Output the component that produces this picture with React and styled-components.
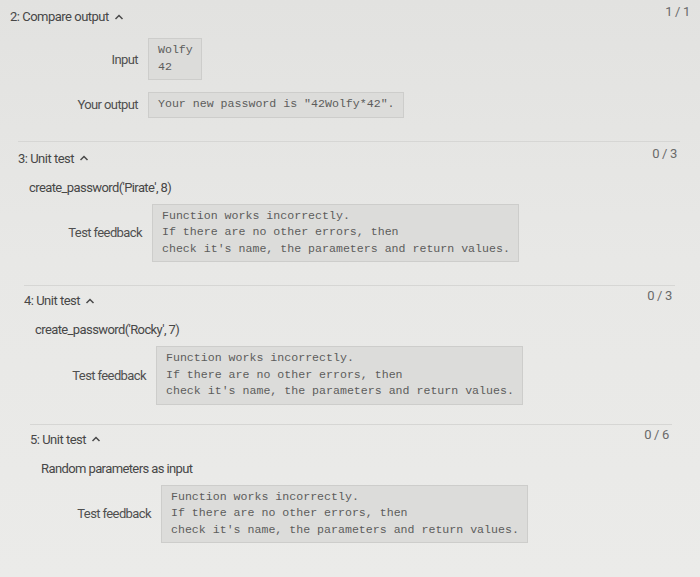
import React from 'react'
import styled, { createGlobalStyle } from 'styled-components'

const GlobalStyle = createGlobalStyle`
  html, body {
    margin: 0;
    padding: 0;
    background: #e7e7e5;
  }
  body {
    font-family: Roboto, "Liberation Sans", sans-serif;
    color: #4a4a4a;
  }
`

function feedback() {
  return [
    'Function works incorrectly.',
    'If there are no other errors, then',
    "check it's name, the parameters and return values.",
  ]
}

// left/right/top/bottom follow the slight tilt of the original screen
const results = [
  {
    id: 2,
    title: 'Compare output',
    score: '1/1',
    left: 10,
    right: 7,
    top: 8,
    bottom: 23,
    labelWidth: 128,
    rows: [
      { label: 'Input', lines: ['Wolfy', '42'] },
      { label: 'Your output', lines: ['Your new password is "42Wolfy*42".'] },
    ],
  },
  {
    id: 3,
    title: 'Unit test',
    score: '0/3',
    left: 18,
    right: 20,
    top: 8,
    bottom: 23,
    labelWidth: 124,
    call: "create_password('Pirate', 8)",
    rows: [{ label: 'Test feedback', lines: feedback() }],
  },
  {
    id: 4,
    title: 'Unit test',
    score: '0/3',
    left: 24,
    right: 25,
    top: 6,
    bottom: 19,
    labelWidth: 122,
    call: "create_password('Rocky', 7)",
    rows: [{ label: 'Test feedback', lines: feedback() }],
  },
  {
    id: 5,
    title: 'Unit test',
    score: '0/6',
    left: 30,
    right: 28,
    top: 6,
    bottom: 19,
    labelWidth: 121,
    call: 'Random parameters as input',
    rows: [{ label: 'Test feedback', lines: feedback() }],
  },
]

function Chevron() {
  return (
    <ChevronIcon width="10" height="8" viewBox="0 0 10 8">
      <polyline points="1.5,6 5,2.5 8.5,6" fill="none" stroke="#4a4a4a" strokeWidth="1.5" />
    </ChevronIcon>
  )
}

function Result({ item, first }) {
  return (
    <Section
      $left={item.left}
      $right={item.right}
      $top={item.top}
      $bottom={item.bottom}
      $first={first}
    >
      <Header>
        <Title>
          {item.id}: {item.title}
          <Chevron />
        </Title>
        <Score>{item.score}</Score>
      </Header>
      {item.call && <Call>{item.call}</Call>}
      <Rows $tight={!item.call}>
        {item.rows.map((row) => (
          <Row key={row.label} $labelWidth={item.labelWidth}>
            <Label>{row.label}</Label>
            <Output>
              {row.lines.map((line) => (
                <div key={line}>{line}</div>
              ))}
            </Output>
          </Row>
        ))}
      </Rows>
    </Section>
  )
}

export default function App() {
  return (
    <>
      <GlobalStyle />
      <Page>
        {results.map((item, i) => (
          <Result key={item.id} item={item} first={i === 0} />
        ))}
      </Page>
    </>
  )
}

const Page = styled.div`
  width: 700px;
  height: 577px;
  overflow: hidden;
  background: linear-gradient(180deg, #e2e2e0 0%, #e8e8e6 45%, #ebebe9 100%);
`

const Section = styled.section`
  margin-left: ${(p) => p.$left}px;
  margin-right: ${(p) => p.$right}px;
  padding: ${(p) => p.$top}px 0 ${(p) => p.$bottom}px;
  border-top: ${(p) => (p.$first ? 'none' : '1px solid #d6d6d4')};
`

const Header = styled.div`
  display: flex;
  justify-content: space-between;
  align-items: flex-start;
  height: 18px;
`

const Title = styled.div`
  display: flex;
  align-items: center;
  gap: 5px;
  font-size: 13px;
  line-height: 18px;
  letter-spacing: -0.5px;
  color: #474747;
`

const ChevronIcon = styled.svg`
  display: block;
  margin-top: -1px;
`

const Score = styled.div`
  font-size: 13px;
  line-height: 13px;
  margin-top: -3px;
  letter-spacing: 2.6px;
  color: #6a6a6a;
`

const Call = styled.div`
  margin: 11px 0 0 11px;
  font-size: 13px;
  line-height: 18px;
  letter-spacing: -0.6px;
  color: #474747;
`

const Rows = styled.div`
  display: flex;
  flex-direction: column;
  gap: 12px;
  margin-top: ${(p) => (p.$tight ? '12px' : '7px')};
`

const Row = styled.div`
  display: grid;
  grid-template-columns: ${(p) => p.$labelWidth}px auto;
  column-gap: 10px;
  align-items: center;
  justify-items: start;
`

const Label = styled.div`
  justify-self: end;
  font-size: 13px;
  letter-spacing: -0.6px;
  color: #4f4f4f;
`

const Output = styled.div`
  padding: 3px 8px 4px 9px;
  background: #dcdcda;
  border: 1px solid #cdcdcb;
  font-family: "Liberation Mono", "Courier New", monospace;
  font-size: 11.6px;
  line-height: 16.5px;
  color: #5c5c5c;
  white-space: pre;
`
